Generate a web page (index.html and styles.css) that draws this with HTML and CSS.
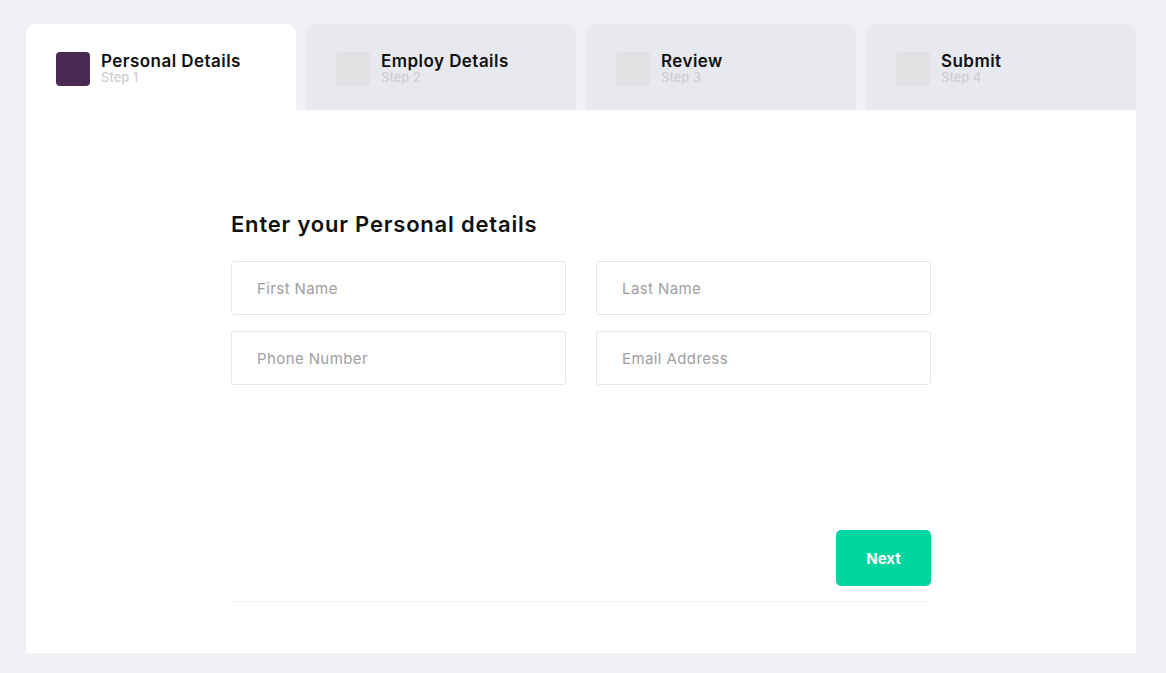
FILE: index.html
```html
<!DOCTYPE html>
<html lang="en">
<head>
<meta charset="UTF-8">
<meta name="viewport" content="width=device-width, initial-scale=1.0">
<title>Registration</title>
<link rel="stylesheet" href="styles.css">
</head>
<body>
<div class="wizard">
  <div class="steps">
    <div class="step active">
      <div class="step-icon"></div>
      <div class="step-text">
        <div class="step-title">Personal Details</div>
        <div class="step-sub">Step 1</div>
      </div>
    </div>
    <div class="step">
      <div class="step-icon"></div>
      <div class="step-text">
        <div class="step-title">Employ Details</div>
        <div class="step-sub">Step 2</div>
      </div>
    </div>
    <div class="step">
      <div class="step-icon"></div>
      <div class="step-text">
        <div class="step-title">Review</div>
        <div class="step-sub">Step 3</div>
      </div>
    </div>
    <div class="step">
      <div class="step-icon"></div>
      <div class="step-text">
        <div class="step-title">Submit</div>
        <div class="step-sub">Step 4</div>
      </div>
    </div>
  </div>

  <div class="panel">
    <form class="form" onsubmit="return false">
      <h3>Enter your Personal details</h3>
      <div class="fields">
        <input type="text" placeholder="First Name">
        <input type="text" placeholder="Last Name">
        <input type="text" placeholder="Phone Number">
        <input type="text" placeholder="Email Address">
      </div>
      <div class="actions">
        <button type="button">Next</button>
      </div>
    </form>
  </div>
</div>
</body>
</html>
```

FILE: styles.css
```css
body {
  margin: 0;
  padding: 24px 0 20px 26px;
  background: #f0f1f6;
  font-family: Inter, "Noto Sans", sans-serif;
}

.wizard {
  width: 1110px;
}

/* step tabs */
.steps {
  display: flex;
  gap: 10px;
}

.step {
  flex: 1;
  height: 86px;
  box-sizing: border-box;
  padding: 28px 30px 0;
  background: #e8e9ee;
  border-radius: 10px 10px 0 0;
  display: flex;
  align-items: flex-start;
  gap: 11px;
}

.step.active {
  background: #fff;
}

.step-icon {
  width: 34px;
  height: 34px;
  border-radius: 4px;
  background: #e1e1e4;
  flex-shrink: 0;
}

.step.active .step-icon {
  background: #4a2a52;
}

.step-title {
  font-size: 17px;
  font-weight: 600;
  line-height: 19px;
  color: #111;
  letter-spacing: 0.45px;
}

.step-sub {
  font-size: 13px;
  line-height: 13px;
  color: #cfcfd2;
  font-weight: 500;
}

/* form panel */
.panel {
  background: #fff;
  padding: 100px 0 51px;
}

.form {
  width: 700px;
  margin: 0 auto;
}

.form h3 {
  margin: 0 0 22px;
  font-size: 22px;
  line-height: 29px;
  font-weight: 600;
  color: #111;
  letter-spacing: 0.8px;
}

.fields {
  display: grid;
  grid-template-columns: 335px 335px;
  gap: 16px 30px;
}

.fields input {
  height: 54px;
  box-sizing: border-box;
  border: 1px solid #e6e6e8;
  border-radius: 3px;
  padding: 0 25px;
  font-family: inherit;
  font-size: 15px;
  letter-spacing: 0.4px;
  color: #333;
  outline: none;
}

.fields input::placeholder {
  color: #a0a0a3;
}

.actions {
  margin-top: 145px;
  padding-bottom: 15px;
  border-bottom: 1px solid #f2f2f4;
  display: flex;
  justify-content: flex-end;
}

.actions button {
  width: 95px;
  height: 56px;
  border: none;
  border-radius: 5px;
  background: #00d6a0;
  color: #fff;
  font-family: inherit;
  font-size: 15px;
  font-weight: 700;
  cursor: pointer;
}

.actions button:hover {
  background: #00c493;
}
```
